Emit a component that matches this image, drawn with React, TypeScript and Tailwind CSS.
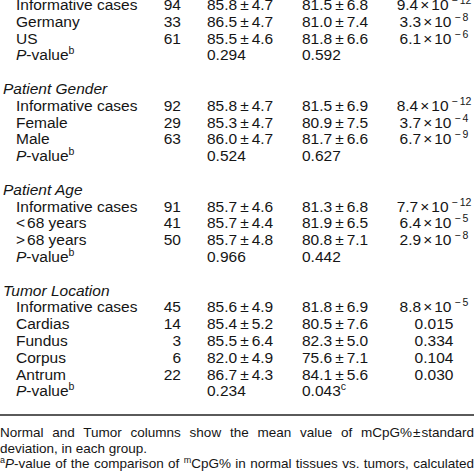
import React from "react";

type P = string | { m: string; e: string };

type Row =
  | { kind: "head"; label: string }
  | { kind: "blank" }
  | { kind: "data"; label: React.ReactNode; n: string; normal: string; tumor: string; p: P }
  | { kind: "pval"; normal: string; tumor: string; sup?: string };

const rows: Row[] = [
  { kind: "data", label: "Informative cases", n: "94", normal: "85.8/4.7", tumor: "81.5/6.8", p: { m: "9.4", e: "12" } },
  { kind: "data", label: "Germany", n: "33", normal: "86.5/4.7", tumor: "81.0/7.4", p: { m: "3.3", e: "8" } },
  { kind: "data", label: "US", n: "61", normal: "85.5/4.6", tumor: "81.8/6.6", p: { m: "6.1", e: "6" } },
  { kind: "pval", normal: "0.294", tumor: "0.592" },
  { kind: "blank" },
  { kind: "head", label: "Patient Gender" },
  { kind: "data", label: "Informative cases", n: "92", normal: "85.8/4.7", tumor: "81.5/6.9", p: { m: "8.4", e: "12" } },
  { kind: "data", label: "Female", n: "29", normal: "85.3/4.7", tumor: "80.9/7.5", p: { m: "3.7", e: "4" } },
  { kind: "data", label: "Male", n: "63", normal: "86.0/4.7", tumor: "81.7/6.6", p: { m: "6.7", e: "9" } },
  { kind: "pval", normal: "0.524", tumor: "0.627" },
  { kind: "blank" },
  { kind: "head", label: "Patient Age" },
  { kind: "data", label: "Informative cases", n: "91", normal: "85.7/4.6", tumor: "81.3/6.8", p: { m: "7.7", e: "12" } },
  { kind: "data", label: <><span className="mr-[2px]">&lt;</span>68 years</>, n: "41", normal: "85.7/4.4", tumor: "81.9/6.5", p: { m: "6.4", e: "5" } },
  { kind: "data", label: <><span className="mr-[2px]">&gt;</span>68 years</>, n: "50", normal: "85.7/4.8", tumor: "80.8/7.1", p: { m: "2.9", e: "8" } },
  { kind: "pval", normal: "0.966", tumor: "0.442" },
  { kind: "blank" },
  { kind: "head", label: "Tumor Location" },
  { kind: "data", label: "Informative cases", n: "45", normal: "85.6/4.9", tumor: "81.8/6.9", p: { m: "8.8", e: "5" } },
  { kind: "data", label: "Cardias", n: "14", normal: "85.4/5.2", tumor: "80.5/7.6", p: "0.015" },
  { kind: "data", label: "Fundus", n: "3", normal: "85.5/6.4", tumor: "82.3/5.0", p: "0.334" },
  { kind: "data", label: "Corpus", n: "6", normal: "82.0/4.9", tumor: "75.6/7.1", p: "0.104" },
  { kind: "data", label: "Antrum", n: "22", normal: "86.7/4.3", tumor: "84.1/5.6", p: "0.030" },
  { kind: "pval", normal: "0.234", tumor: "0.043", sup: "c" },
];

// mean ± sd, written "a/b" in the data
function PM({ v }: { v: string }) {
  const [a, b] = v.split("/");
  return (
    <>
      {a}
      <span className="mx-[3px]">±</span>
      {b}
    </>
  );
}

function PCell({ p }: { p: P }) {
  if (typeof p === "string") return <>{p}</>;
  return (
    <>
      {p.m}
      <span className="mx-[2px]">×</span>
      10
      <span className="relative -top-[6px] ml-[3px] text-[10.5px]">
        −<span className="ml-[2px]">{p.e}</span>
      </span>
    </>
  );
}

function PLabel() {
  return (
    <>
      <i>P</i>-value<span className="relative -top-[6px] text-[10.5px]">b</span>
    </>
  );
}

function TableRow({ r }: { r: Row }) {
  if (r.kind === "blank") return <div className="h-[16.8px]" />;
  if (r.kind === "head")
    return <div className="flex h-[16.8px] pl-[3px] italic whitespace-nowrap">{r.label}</div>;
  if (r.kind === "pval")
    return (
      <div className="flex h-[16.8px] whitespace-nowrap">
        <div className="w-[150px] pl-[16px]">
          <PLabel />
        </div>
        <div className="w-[31px]" />
        <div className="ml-[26px] w-[95px]">{r.normal}</div>
        <div className="w-[92px]">
          {r.tumor}
          {r.sup && <span className="relative -top-[6px] text-[10.5px]">{r.sup}</span>}
        </div>
      </div>
    );
  return (
    <div className="flex h-[16.8px] whitespace-nowrap">
      <div className="w-[150px] pl-[16px]">{r.label}</div>
      <div className="w-[31px] text-right">{r.n}</div>
      <div className="ml-[26px] w-[95px]">
        <PM v={r.normal} />
      </div>
      <div className="w-[92px]">
        <PM v={r.tumor} />
      </div>
      <div className="w-[80px] text-center">
        <PCell p={r.p} />
      </div>
    </div>
  );
}

export default function App() {
  return (
    <div className="h-[474px] w-[474px] overflow-hidden bg-white text-[#151515] font-['Liberation_Sans',Arial,sans-serif]">
      <div className="-mt-[3px] text-[15.5px] leading-[16.8px]">
        {rows.map((r, i) => (
          <TableRow key={i} r={r} />
        ))}
      </div>
      <div className="mt-[14px] h-[2px] bg-[#5a5a5a]" />
      <div className="mt-[9px] text-[13.5px] leading-[15.5px]">
        <p className="text-justify [text-align-last:justify] whitespace-nowrap">
          Normal and Tumor columns show the mean value of mCpG%<span className="mx-[1px]">±</span>standard
        </p>
        <p>deviation, in each group.</p>
        <p className="text-justify [text-align-last:justify] whitespace-nowrap">
          <span className="relative -top-[5px] text-[9px]">a</span>
          <i>P</i>-value of the comparison of <span className="relative -top-[5px] text-[9px]">m</span>CpG% in normal tissues vs. tumors, calculated
        </p>
      </div>
    </div>
  );
}
